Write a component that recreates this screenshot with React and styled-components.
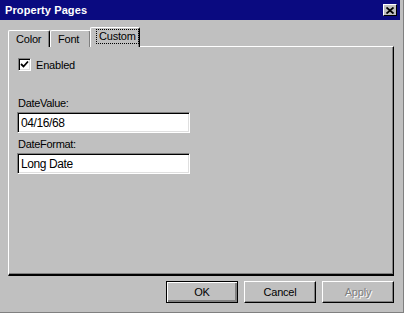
import React from "react";
import styled, { createGlobalStyle, css } from "styled-components";

const GlobalStyle = createGlobalStyle`
  html, body {
    margin: 0;
    padding: 0;
    background: #c0c0c0;
  }
  body {
    font-family: "Liberation Sans", Arial, sans-serif;
    font-size: 11px;
    color: #000;
  }
`;

const Window = styled.div`
  width: 404px;
  height: 313px;
  box-sizing: border-box;
  background: #c0c0c0;
  border-right: 1px solid #808080;
  border-bottom: 1px solid #808080;
  padding: 0 3px 2px 0;
  display: flex;
  flex-direction: column;
`;

const TitleBar = styled.div`
  height: 20px;
  background: #0a0a80;
  display: flex;
  align-items: center;
  justify-content: space-between;
  padding: 0 3px 0 5px;
`;

const Title = styled.span`
  color: #fff;
  font-weight: bold;
  font-size: 11px;
  letter-spacing: 0.1px;
`;

const CloseButton = styled.div`
  width: 14px;
  height: 12px;
  box-sizing: border-box;
  background: #c0c0c0;
  border-top: 1px solid #fff;
  border-left: 1px solid #fff;
  border-right: 1px solid #000;
  border-bottom: 1px solid #000;
  display: flex;
  align-items: center;
  justify-content: center;
`;

const Body = styled.div`
  flex: 1;
  display: flex;
  flex-direction: column;
  padding: 8px 6px 0 8px;
`;

const TabStrip = styled.div`
  display: flex;
  align-items: flex-end;
  height: 19px;
  position: relative;
  z-index: 1;
  margin-bottom: -1px;
`;

const Tab = styled.div`
  box-sizing: border-box;
  height: 17px;
  width: ${(p) => p.$w}px;
  padding-left: 7px;
  padding-top: 2px;
  background: #c0c0c0;
  border-top: 1px solid #fff;
  border-left: 1px solid #fff;
  border-right: 1px solid #000;
  border-top-left-radius: 2px;
  border-top-right-radius: 2px;
  box-shadow: inset -1px 0 0 #808080;
  font-size: 11px;
  letter-spacing: -0.2px;
  ${(p) =>
    p.$active &&
    css`
      height: 20px;
      margin-left: -1px;
      padding-left: 5px;
      padding-top: 1px;
    `}
`;

const Focus = styled.span`
  display: inline-block;
  border: 1px dotted #000;
  padding: 0 2px;
  line-height: 13px;
`;

const Panel = styled.div`
  height: 230px;
  box-sizing: border-box;
  border-top: 1px solid #fff;
  border-left: 1px solid #fff;
  border-right: 1px solid #000;
  border-bottom: 2px solid #000;
  box-shadow: inset -1px -1px 0 #808080;
  padding: 11px 0 0 9px;
  display: flex;
  flex-direction: column;
`;

const CheckRow = styled.label`
  display: flex;
  align-items: center;
  gap: 5px;
  font-size: 11px;
  letter-spacing: -0.2px;
`;

const Sunken = css`
  box-sizing: border-box;
  background: #fff;
  border-top: 1px solid #808080;
  border-left: 1px solid #808080;
  border-right: 1px solid #fff;
  border-bottom: 1px solid #fff;
  box-shadow: inset 1px 1px 0 #000, inset -1px -1px 0 #dfdfdf;
`;

const CheckBox = styled.span`
  ${Sunken}
  width: 13px;
  height: 13px;
  display: flex;
  align-items: center;
  justify-content: center;
`;

const FieldLabel = styled.div`
  font-size: 11px;
  letter-spacing: -0.3px;
  margin-top: ${(p) => p.$top}px;
  margin-bottom: 3px;
`;

const Field = styled.div`
  ${Sunken}
  width: 173px;
  height: 21px;
  margin-left: -1px;
  padding: 3px 0 0 3px;
  font-size: 12px;
  letter-spacing: -0.4px;
`;

const Footer = styled.div`
  display: flex;
  justify-content: flex-end;
  gap: 6px;
  padding-top: 5px;
`;

const Button = styled.div`
  box-sizing: border-box;
  width: 72px;
  height: 22px;
  background: #c0c0c0;
  border-top: 1px solid #fff;
  border-left: 1px solid #fff;
  border-right: 1px solid #000;
  border-bottom: 1px solid #000;
  box-shadow: inset -1px -1px 0 #808080;
  display: flex;
  align-items: center;
  justify-content: center;
  font-size: 11px;
  letter-spacing: -0.2px;
  ${(p) =>
    p.$default &&
    css`
      border: 1px solid #000;
      box-shadow: inset 1px 1px 0 #fff, inset -2px -2px 0 #808080,
        inset -1px -1px 0 #000;
    `}
  ${(p) =>
    p.$disabled &&
    css`
      color: #808080;
      text-shadow: 1px 1px 0 #fff;
    `}
`;

export default function App() {
  return (
    <>
      <GlobalStyle />
      <Window>
        <TitleBar>
          <Title>Property Pages</Title>
          <CloseButton>
            <svg width="8" height="7" viewBox="0 0 8 7">
              <path d="M0.5 0.5 L7.5 6.5 M7.5 0.5 L0.5 6.5" stroke="#000" strokeWidth="1.8" />
            </svg>
          </CloseButton>
        </TitleBar>
        <Body>
          <TabStrip>
            <Tab $w={42}>Color</Tab>
            <Tab $w={41}>Font</Tab>
            <Tab $w={50} $active>
              <Focus>Custom</Focus>
            </Tab>
          </TabStrip>
          <Panel>
            <CheckRow>
              <CheckBox>
                <svg width="9" height="9" viewBox="0 0 9 9">
                  <path d="M1 4 L3.5 6.5 L8 1.5" fill="none" stroke="#000" strokeWidth="1.8" />
                </svg>
              </CheckBox>
              Enabled
            </CheckRow>
            <FieldLabel $top={26}>DateValue:</FieldLabel>
            <Field>04/16/68</Field>
            <FieldLabel $top={5}>DateFormat:</FieldLabel>
            <Field>Long Date</Field>
          </Panel>
          <Footer>
            <Button $default>OK</Button>
            <Button>Cancel</Button>
            <Button $disabled>Apply</Button>
          </Footer>
        </Body>
      </Window>
    </>
  );
}
